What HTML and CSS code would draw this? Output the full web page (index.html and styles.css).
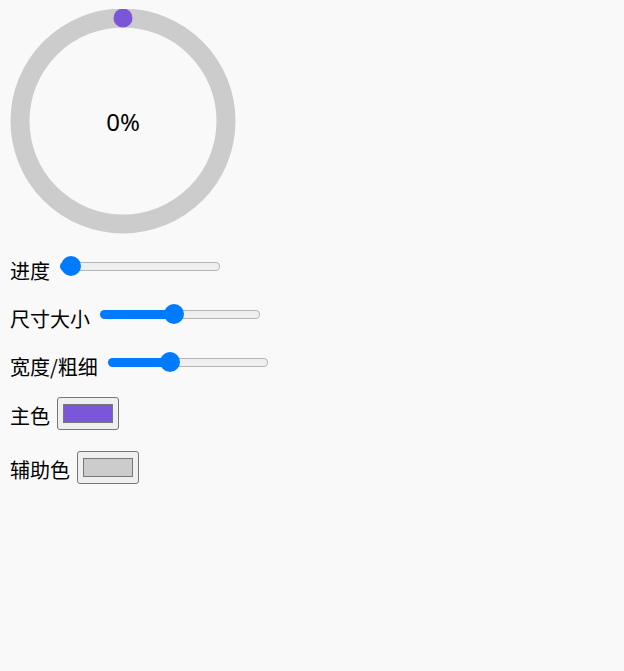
FILE: index.html
```html
<!DOCTYPE html>
<html lang="zh-CN">
<head>
    <meta charset="UTF-8">
    <meta name="viewport" content="width=device-width, initial-scale=1.0">
    <title>圆形进度条</title>
    <link rel="stylesheet" href="styles.css">
</head>
<body>
    <div class="ring">
        <svg width="226" height="226" viewBox="0 0 226 226">
            <circle class="ring-track" cx="113" cy="112" r="103"></circle>
            <circle class="ring-dot" cx="113" cy="9" r="9.5"></circle>
            <text class="ring-label" x="113" y="122">0%</text>
        </svg>
    </div>

    <div class="controls">
        <div class="row">
            <label class="label">进度</label>
            <input class="slider" type="range" min="0" max="100" value="0" style="--p: 0">
        </div>
        <div class="row">
            <label class="label">尺寸大小</label>
            <input class="slider" type="range" min="0" max="100" value="46" style="--p: 0.46">
        </div>
        <div class="row">
            <label class="label">宽度/粗细</label>
            <input class="slider" type="range" min="0" max="100" value="37" style="--p: 0.375">
        </div>
        <div class="row color-row">
            <label class="label">主色</label>
            <span class="color-box"><span class="swatch swatch-main"></span></span>
        </div>
        <div class="row color-row">
            <label class="label">辅助色</label>
            <span class="color-box"><span class="swatch swatch-sub"></span></span>
        </div>
    </div>
</body>
</html>
```

FILE: styles.css
```css
* {
    box-sizing: border-box;
}
body {
    margin: 9px 10px 10px 10px;
    background: #f9f9f9;
    color: #000;
    font-family: "Noto Sans", "Noto Sans CJK SC", sans-serif;
    font-size: 20px;
}
.ring svg {
    display: block;
}
.ring-track {
    fill: none;
    stroke: #cccccc;
    stroke-width: 19;
}
.ring-dot {
    fill: #7b56d8;
}
.ring-label {
    font-family: "Noto Sans", "Noto Sans CJK SC", sans-serif;
    font-size: 24px;
    text-anchor: middle;
    fill: #000;
}
.controls {
    margin-top: 17px;
    display: flex;
    flex-direction: column;
    gap: 20px;
}
.row {
    display: flex;
    align-items: center;
    gap: 10px;
    height: 28px;
}
.row .label {
    font-family: "Noto Sans CJK SC", sans-serif;
    line-height: 1;
    padding-top: 9px;
}
.color-row {
    height: 34px;
    gap: 7px;
}
.color-row .label {
    padding-top: 6px;
}
.slider {
    -webkit-appearance: none;
    appearance: none;
    margin: 0;
    width: 160px;
    height: 20px;
    background: transparent;
}
.slider::-webkit-slider-runnable-track {
    height: 9px;
    border: 1px solid transparent;
    border-radius: 5px;
    background:
        linear-gradient(to right, #007bff calc(11px + var(--p) * 138px), transparent calc(11px + var(--p) * 138px)) border-box,
        linear-gradient(#efefef, #efefef) padding-box,
        #b5b5b5 border-box;
}
.slider::-webkit-slider-thumb {
    -webkit-appearance: none;
    appearance: none;
    width: 20px;
    height: 20px;
    margin-top: -6.5px;
    border-radius: 50%;
    background: #007bff;
    border: none;
}
.color-box {
    display: block;
    width: 62px;
    height: 33px;
    padding: 6px 5px;
    background: #efefef;
    border: 1px solid #767676;
    border-radius: 3px;
}
.swatch {
    display: block;
    width: 50px;
    height: 19px;
    border: 1px solid #777;
}
.swatch-main {
    background: #7b56d8;
}
.swatch-sub {
    background: #cccccc;
}
```
